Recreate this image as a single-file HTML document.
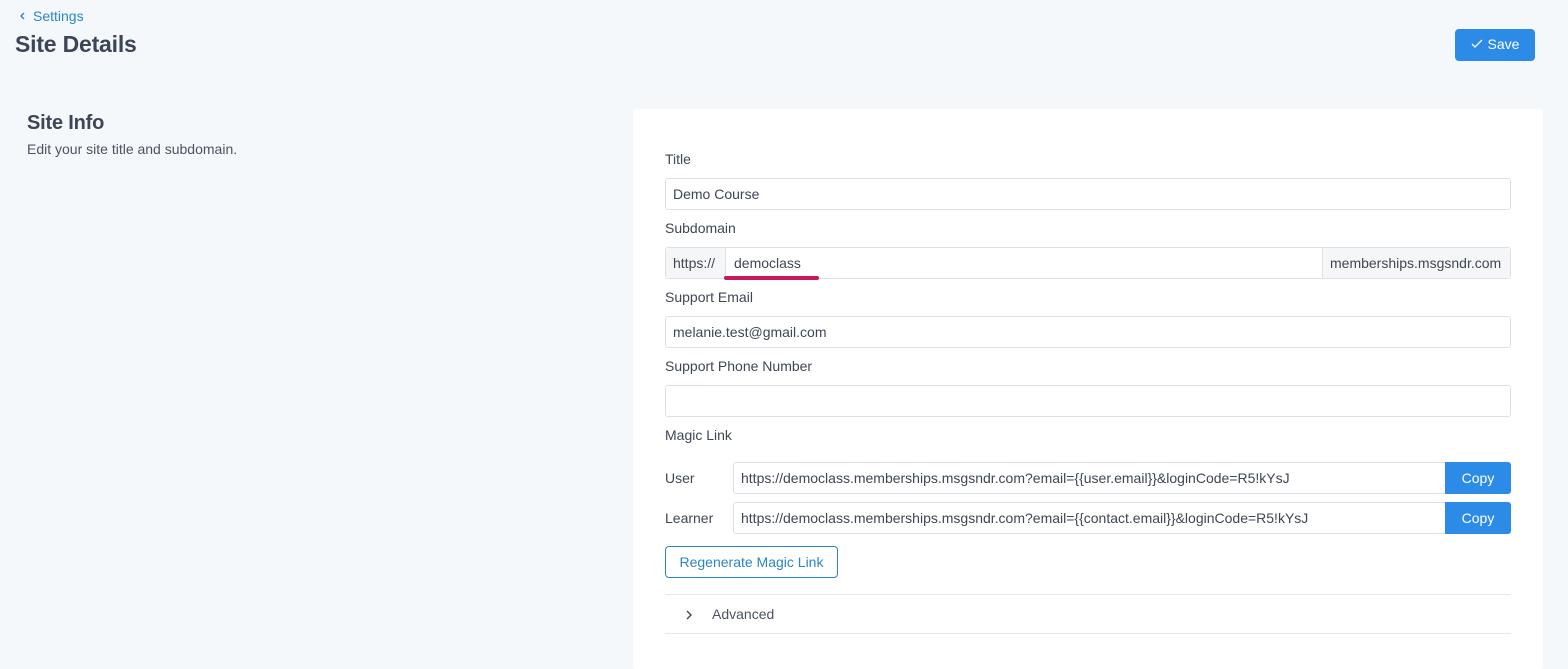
<!DOCTYPE html>
<html><head><style>
*{box-sizing:border-box;margin:0;padding:0}
body{width:1568px;height:650px;overflow:hidden;background:#f5f8fb;font-family:"Liberation Sans",sans-serif;color:#374151;position:relative;font-size:14px}
.a{position:absolute}
.inp{position:absolute;height:32px;border:1px solid #dde1e6;border-radius:3px;background:#fff;padding:0 7px;line-height:30px;font-size:14px;color:#3f4654}
.lbl{position:absolute;font-size:14px;color:#3f4654}
.copy{position:absolute;width:66px;height:32px;background:#2d8be8;color:#fff;line-height:32px;text-align:center;border-radius:0 3px 3px 0;font-size:14px}
</style></head><body>
<div class="a" style="left:18px;top:8px;color:#2a86c4;font-size:14px"><svg width="10" height="10" viewBox="0 0 10 10" style="margin-right:5px"><path d="M6 2L3 5l3 3" stroke="#2a86c4" stroke-width="1.4" fill="none"/></svg>Settings</div>
<div class="a" style="left:15px;top:31px;font-size:23px;font-weight:bold;color:#3d4656;letter-spacing:-0.2px">Site Details</div>
<div class="a" style="left:1455px;top:29px;width:80px;height:32px;background:#2d8be8;border-radius:4px;color:#fff;line-height:31px;text-align:center;font-size:14px"><svg width="12" height="10" viewBox="0 0 12 10" style="margin-right:5px"><path d="M1 5l3 3 7-7" stroke="#fff" stroke-width="1.3" fill="none"/></svg>Save</div>
<div class="a" style="left:27px;top:112px;font-size:20px;font-weight:bold;color:#3d4656;letter-spacing:-0.2px">Site Info</div>
<div class="a" style="left:27px;top:141px;font-size:14px;color:#4b5360">Edit your site title and subdomain.</div>
<div class="a" style="left:633px;top:109px;width:910px;height:560px;background:#fff;border-radius:4px"></div>
<div class="lbl" style="left:665px;top:151px">Title</div>
<div class="inp" style="left:665px;top:178px;width:846px">Demo Course</div>
<div class="lbl" style="left:665px;top:220px">Subdomain</div>
<div class="inp" style="left:665px;top:247px;width:846px;padding:0"></div>
<div class="a" style="left:666px;top:248px;width:60px;height:30px;background:#f5f6f8;border-right:1px solid #dde1e6;line-height:30px;padding-left:7px;color:#3f4654">https://</div>
<div class="a" style="left:734px;top:248px;line-height:30px;color:#3f4654">democlass</div>
<div class="a" style="left:724px;top:276px;width:95px;height:4px;background:#c8175d;border-radius:2px"></div>
<div class="a" style="left:1322px;top:248px;width:188px;height:30px;background:#f5f6f8;border-left:1px solid #dde1e6;line-height:30px;padding-left:7px;color:#3f4654">memberships.msgsndr.com</div>
<div class="lbl" style="left:665px;top:289px">Support Email</div>
<div class="inp" style="left:665px;top:316px;width:846px">melanie.test@gmail.com</div>
<div class="lbl" style="left:665px;top:358px">Support Phone Number</div>
<div class="inp" style="left:665px;top:385px;width:846px"></div>
<div class="lbl" style="left:665px;top:427px">Magic Link</div>
<div class="lbl" style="left:665px;top:470px">User</div>
<div class="inp" style="left:733px;top:462px;width:714px;border-radius:3px 0 0 3px">https://democlass.memberships.msgsndr.com?email={{user.email}}&amp;loginCode=R5!kYsJ</div>
<div class="copy" style="left:1445px;top:462px">Copy</div>
<div class="lbl" style="left:665px;top:510px">Learner</div>
<div class="inp" style="left:733px;top:502px;width:714px;border-radius:3px 0 0 3px">https://democlass.memberships.msgsndr.com?email={{contact.email}}&amp;loginCode=R5!kYsJ</div>
<div class="copy" style="left:1445px;top:502px">Copy</div>
<div class="a" style="left:665px;top:546px;width:173px;height:32px;border:1px solid #2a86c4;border-radius:4px;color:#2a86c4;text-align:center;line-height:30px">Regenerate Magic Link</div>
<div class="a" style="left:665px;top:594px;width:846px;border-top:1px solid #e3e6ea"></div>
<div class="a" style="left:684px;top:608px"><svg width="10" height="12" viewBox="0 0 10 12"><path d="M3 2l4 4-4 4" stroke="#3f4654" stroke-width="1.4" fill="none"/></svg></div>
<div class="a" style="left:712px;top:606px;color:#4b5360">Advanced</div>
<div class="a" style="left:665px;top:633px;width:846px;border-top:1px solid #e3e6ea"></div>
</body></html>
